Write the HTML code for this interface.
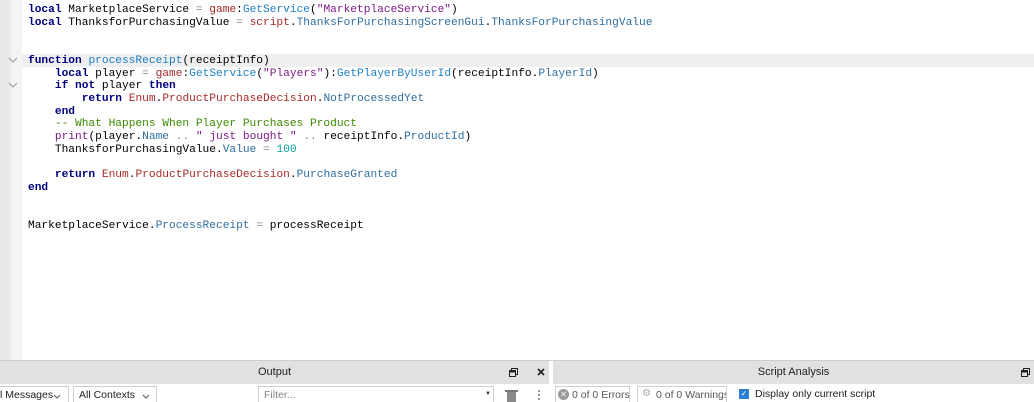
<!DOCTYPE html>
<html><head><meta charset="utf-8"><style>
*{margin:0;padding:0;box-sizing:border-box}
body{width:1034px;height:402px;overflow:hidden;background:#fff;position:relative;font-family:"Liberation Sans",sans-serif}
.g1{position:absolute;left:0;top:0;width:11px;height:360px;background:#e9e9e9}
.g2{position:absolute;left:11px;top:0;width:11px;height:360px;background:#f4f4f4}
.hl{position:absolute;left:22px;top:54px;width:1012px;height:13px;background:#efefef}
pre{position:absolute;left:28px;top:4px;font-family:"Liberation Mono",monospace;font-size:11.2px;line-height:12.7px;color:#000}
.k{color:#00007f;font-weight:bold}
.b{color:#a52a2a}
.m{color:#1f7fc4}
.s{color:#7b1a85}
.p{color:#2f6e9e}
.n{color:#0a9a9a}
.c{color:#3c8a00}
.o{color:#888}
.fold{position:absolute;left:8px;width:10px;height:6px}
.bar{position:absolute;top:360px;left:0;width:1034px;height:1px;background:#cfcfcf}
.hdr{position:absolute;top:361px;height:23px;background:#e1e1e1;font-size:11px;color:#222;text-align:center;line-height:23px}
.dd{position:absolute;top:386px;height:16px;border:1px solid #cfcfcf;border-bottom:none;background:#fff;font-size:10.5px;line-height:16px;color:#222;padding-left:5px;white-space:nowrap;overflow:hidden}
.chev{position:absolute;width:8px;height:5px}
</style></head><body>
<div class="g1"></div><div class="g2"></div><div class="hl"></div>
<svg class="fold" style="top:57px" viewBox="0 0 10 6"><path d="M1 1L5 5L9 1" fill="none" stroke="#999" stroke-width="1"/></svg>
<svg class="fold" style="top:82px" viewBox="0 0 10 6"><path d="M1 1L5 5L9 1" fill="none" stroke="#999" stroke-width="1"/></svg>
<pre><span class="k">local</span> MarketplaceService <span class="o">=</span> <span class="b">game</span>:<span class="m">GetService</span>(<span class="s">"MarketplaceService"</span>)
<span class="k">local</span> ThanksforPurchasingValue <span class="o">=</span> <span class="b">script</span>.<span class="p">ThanksForPurchasingScreenGui</span>.<span class="p">ThanksForPurchasingValue</span>


<span class="k">function</span> <span class="m">processReceipt</span>(receiptInfo)
    <span class="k">local</span> player <span class="o">=</span> <span class="b">game</span>:<span class="m">GetService</span>(<span class="s">"Players"</span>):<span class="m">GetPlayerByUserId</span>(receiptInfo.<span class="p">PlayerId</span>)
    <span class="k">if</span> <span class="k">not</span> player <span class="k">then</span>
        <span class="k">return</span> <span class="b">Enum</span>.<span class="b">ProductPurchaseDecision</span>.<span class="p">NotProcessedYet</span>
    <span class="k">end</span>
    <span class="c">-- What Happens When Player Purchases Product</span>
    <span class="s">print</span>(player.<span class="p">Name</span> <span class="o">..</span> <span class="s">" just bought "</span> <span class="o">..</span> receiptInfo.<span class="p">ProductId</span>)
    ThanksforPurchasingValue.<span class="p">Value</span> <span class="o">=</span> <span class="n">100</span>

    <span class="k">return</span> <span class="b">Enum</span>.<span class="b">ProductPurchaseDecision</span>.<span class="p">PurchaseGranted</span>
<span class="k">end</span>


MarketplaceService.<span class="p">ProcessReceipt</span> <span class="o">=</span> processReceipt</pre>
<div class="bar"></div>
<div class="hdr" style="left:0;width:549px">Output</div>
<svg style="position:absolute;left:509px;top:368px" width="9" height="9" viewBox="0 0 9 9"><rect x="2.5" y="0.5" width="6" height="6" fill="none" stroke="#222"/><rect x="0.5" y="2.5" width="6" height="6" fill="#e1e1e1" stroke="#222"/><rect x="0.5" y="2.5" width="6" height="2" fill="#222"/></svg>
<svg style="position:absolute;left:537px;top:368px" width="8" height="8" viewBox="0 0 8 8"><path d="M1 1L7 7M7 1L1 7" stroke="#222" stroke-width="1.6"/></svg>
<div style="position:absolute;left:549px;top:361px;width:4px;height:41px;background:#fff"></div>
<div class="hdr" style="left:553px;width:481px">Script Analysis</div>
<svg style="position:absolute;left:1021px;top:368px" width="9" height="9" viewBox="0 0 9 9"><rect x="2.5" y="0.5" width="6" height="6" fill="none" stroke="#222"/><rect x="0.5" y="2.5" width="6" height="6" fill="#e1e1e1" stroke="#222"/><rect x="0.5" y="2.5" width="6" height="2" fill="#222"/></svg>
<div class="dd" style="left:-6px;width:75px">l Messages</div><svg class="chev" style="left:53px;top:394px" viewBox="0 0 8 5"><path d="M1 1L4 4L7 1" fill="none" stroke="#555"/></svg>
<div class="dd" style="left:73px;width:84px">All Contexts</div><svg class="chev" style="left:142px;top:394px" viewBox="0 0 8 5"><path d="M1 1L4 4L7 1" fill="none" stroke="#555"/></svg>
<div class="dd" style="left:258px;width:236px;color:#888">Filter...</div><div style="position:absolute;left:485px;top:391px;font-size:6px;color:#333">&#9660;</div>
<div style="position:absolute;left:507px;top:392px;width:9px;height:10px;background:#8a8a8a"></div>
<div style="position:absolute;left:505px;top:390px;width:13px;height:2px;background:#777"></div>
<div style="position:absolute;left:538px;top:390px;width:2px;height:2px;background:#999;box-shadow:0 4px #999,0 8px #999"></div>
<div class="dd" style="left:555px;width:75px;padding-left:16px;color:#555">0 of 0 Errors</div>
<div style="position:absolute;left:558px;top:389px;width:11px;height:11px;border-radius:50%;background:#9a9a9a;color:#fff;font-size:8px;line-height:11px;text-align:center">&#10005;</div>
<div class="dd" style="left:637px;width:90px;padding-left:18px;color:#555">0 of 0 Warnings</div>
<div style="position:absolute;left:642px;top:388px;font-size:10px;color:#aaa">&#9881;</div>
<div style="position:absolute;left:739px;top:389px;width:10px;height:10px;background:#2a7fd4;color:#fff;font-size:8px;line-height:10px;text-align:center">&#10003;</div>
<div style="position:absolute;left:755px;top:386px;font-size:10.5px;line-height:16px;color:#222;white-space:nowrap">Display only current script</div>
</body></html>
